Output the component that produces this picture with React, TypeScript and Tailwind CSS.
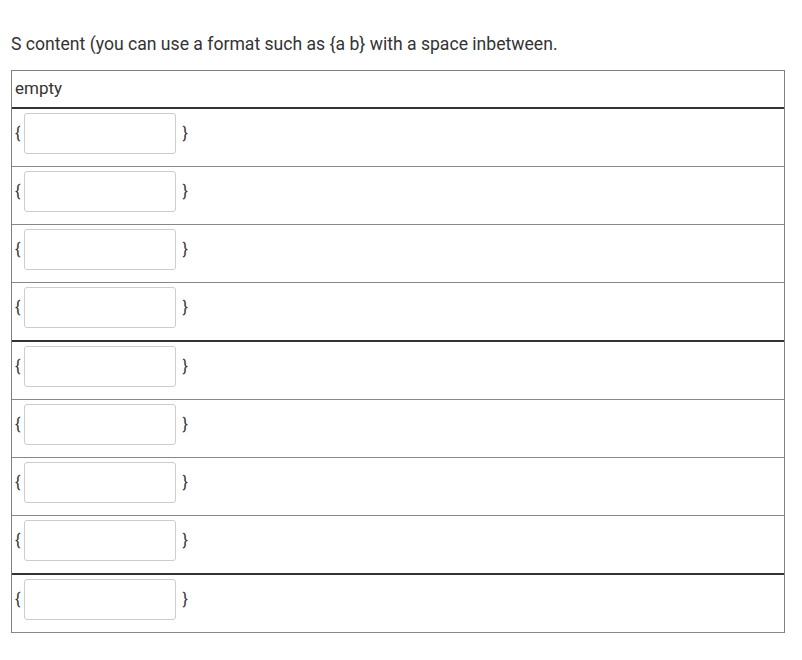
const ROWS = 9;

function BraceRow({ thick }: { thick: boolean }) {
  return (
    <div
      className={`flex items-start pl-[3px] pt-[4px] ${
        thick ? "h-[59px] border-b-2 border-[#333]" : "h-[58px] border-b border-[#888]"
      }`}
    >
      <span className="mt-[11px] text-[16px] leading-[20px] text-[#333]">{"{"}</span>
      <input
        type="text"
        className="ml-[4px] h-[41px] w-[152px] rounded-[3px] border border-[#ccc] bg-white px-2 outline-none"
      />
      <span className="ml-[6px] mt-[11px] text-[16px] leading-[20px] text-[#333]">{"}"}</span>
    </div>
  );
}

export default function App() {
  return (
    <div className="min-h-screen bg-white px-[11px] pt-[32px] font-['Roboto',sans-serif] text-[#333]">
      <p className="text-[17.6px] leading-[24px]">
        S content (you can use a format such as {"{a b}"} with a space inbetween.
      </p>
      <div className="mt-[14px] w-[774px] border border-b-0 border-[#808080]">
        <div className="flex h-[38px] items-center border-b-2 border-[#333] pl-[3px] text-[17px]">
          empty
        </div>
        {Array.from({ length: ROWS }).map((_, i) => (
          <BraceRow key={i} thick={i === 3 || i === 7} />
        ))}
      </div>
    </div>
  );
}
